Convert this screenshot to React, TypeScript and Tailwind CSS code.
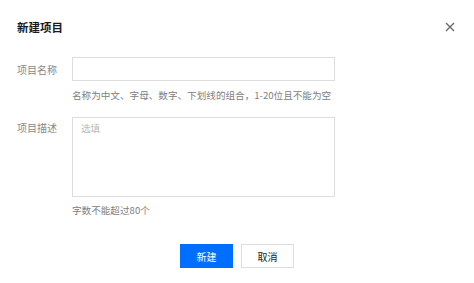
export default function App() {
  return (
    <div
      className="w-[474px] h-[283px] bg-white relative overflow-hidden"
      style={{ fontFamily: '"Noto Sans CJK SC", "Liberation Sans", sans-serif' }}
    >
      <div className="flex items-center justify-between pl-[17px] pr-[18px] pt-[19px]">
        <h2 className="text-[11.5px] leading-[16px] font-bold text-[#1a1a1a]">新建项目</h2>
        <button className="w-[12px] h-[12px] flex items-center justify-center text-[#666]">
          <svg width="10" height="10" viewBox="0 0 10 10" fill="none" stroke="currentColor" strokeWidth="1.3">
            <path d="M1 1L9 9M9 1L1 9" />
          </svg>
        </button>
      </div>

      <div className="pl-[17px] pt-[22px] flex flex-col">
        <div className="flex items-center">
          <label className="w-[55px] text-[10px] text-[#888]">项目名称</label>
          <input
            className="w-[263px] h-[24px] border border-[#dddddd] outline-none px-2 text-[9.6px]"
            type="text"
          />
        </div>
        <p className="ml-[55px] mt-[8px] text-[9.6px] leading-[13px] text-[#808080]">
          名称为中文、字母、数字、下划线的组合，1-20位且不能为空
        </p>

        <div className="flex items-start mt-[15px]">
          <label className="w-[55px] text-[10px] leading-[13px] text-[#888] pt-[4px]">项目描述</label>
          <textarea
            className="w-[263px] h-[80px] border border-[#dddddd] outline-none resize-none px-[8px] py-[4px] text-[9.6px] leading-[13px] placeholder:text-[#bbbbbb]"
            placeholder="选填"
          />
        </div>
        <p className="ml-[55px] mt-[7px] text-[9.6px] leading-[13px] text-[#808080]">字数不能超过80个</p>
      </div>

      <div className="flex justify-center gap-[8px] mt-[27px]">
        <button className="w-[53px] h-[24px] bg-[#006eff] text-white text-[10px]">新建</button>
        <button className="w-[53px] h-[24px] bg-white border border-[#dddddd] text-[#222] text-[10px]">取消</button>
      </div>
    </div>
  );
}
